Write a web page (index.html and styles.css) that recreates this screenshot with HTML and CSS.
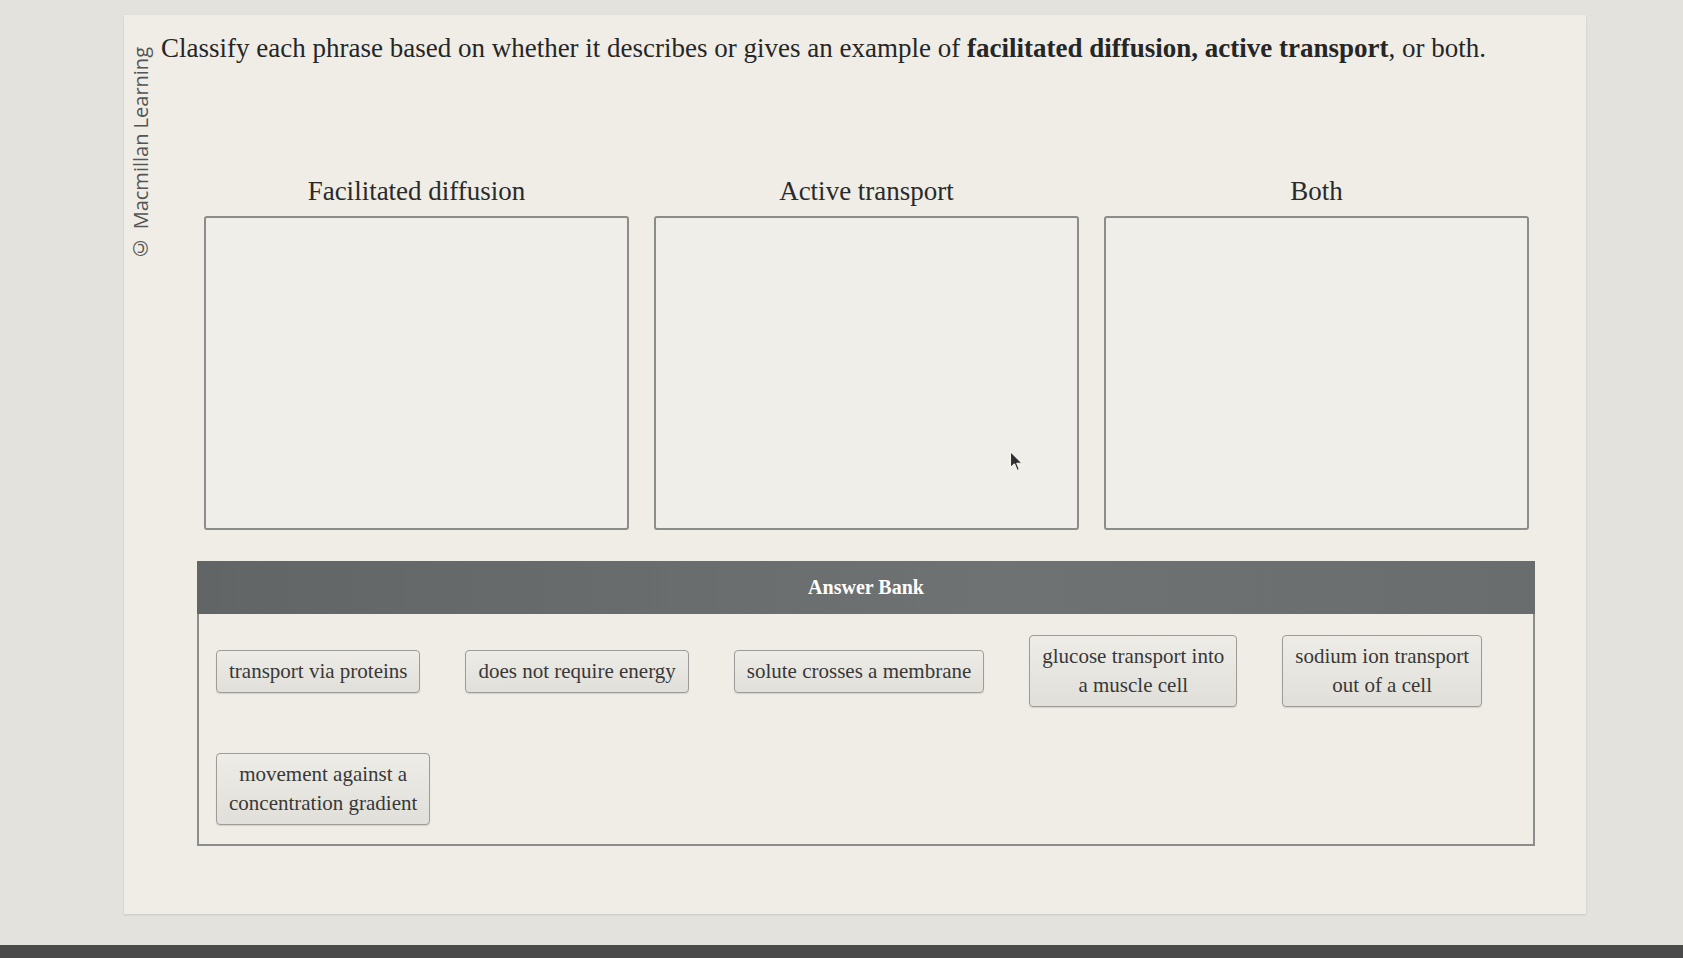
FILE: index.html
```html
<!DOCTYPE html>
<html lang="en">
<head>
<meta charset="utf-8">
<title>Classify phrases</title>
<link rel="stylesheet" href="styles.css">
</head>
<body>
<div class="screen">
  <div class="panel">
    <div class="gutter"><span class="watermark">© Macmillan Learning</span></div>
    <div class="main">
      <p class="prompt">Classify each phrase based on whether it describes or gives an example of <b>facilitated diffusion, active transport</b>, or both.</p>
      <div class="columns">
        <div class="column">
          <div class="label">Facilitated diffusion</div>
          <div class="dropbox"></div>
        </div>
        <div class="column">
          <div class="label">Active transport</div>
          <div class="dropbox"></div>
        </div>
        <div class="column">
          <div class="label">Both</div>
          <div class="dropbox"></div>
        </div>
        <svg class="cursor" width="15" height="23" viewBox="0 0 15 23"><path d="M1.5 1.5 L1.5 17.5 L5.5 14 L8.2 20.5 L10.4 19.6 L7.8 13.2 L13 13.2 Z" fill="#2f2f2f" stroke="#f4f2ec" stroke-width="1.1" stroke-linejoin="round"/></svg>
      </div>
      <div class="bank">
        <div class="bank-head">Answer Bank</div>
        <div class="bank-body">
          <div class="chip">transport via proteins</div>
          <div class="chip">does not require energy</div>
          <div class="chip">solute crosses a membrane</div>
          <div class="chip">glucose transport into<br>a muscle cell</div>
          <div class="chip">sodium ion transport<br>out of a cell</div>
          <div class="chip">movement against a<br>concentration gradient</div>
        </div>
      </div>
    </div>
  </div>
  <div class="floor"></div>
</div>
</body>
</html>
```
FILE: styles.css
```css
html, body {
  margin: 0;
  padding: 0;
}
body {
  width: 1683px;
  height: 958px;
  overflow: hidden;
  background: #e4e2dc;
  font-family: "Liberation Serif", "Times New Roman", serif;
  color: #2b2b2b;
}
.screen {
  height: 958px;
  display: flex;
  flex-direction: column;
}
.panel {
  margin: 15px 0 0 124px;
  width: 1462px;
  height: 899px;
  background: #efede6;
  display: flex;
  box-shadow: 0 1px 2px rgba(0,0,0,0.12);
}
.gutter {
  width: 37px;
  padding: 32px 0 0 6px;
  box-sizing: border-box;
}
.watermark {
  display: block;
  writing-mode: vertical-rl;
  transform: rotate(180deg);
  font-family: "Open Sans", "Noto Sans", sans-serif;
  font-size: 20px;
  line-height: 22px;
  color: #555;
  white-space: nowrap;
}
.main {
  flex: 1;
  padding-top: 18px;
}
.prompt {
  margin: 0;
  font-size: 27px;
  line-height: 30px;
  color: #262626;
}
.prompt b {
  font-weight: bold;
}
.columns {
  position: relative;
  margin: 113px 0 0 43px;
  display: flex;
  gap: 25px;
  width: 1325px;
}
.column {
  width: 425px;
  display: flex;
  flex-direction: column;
}
.label {
  text-align: center;
  font-size: 27px;
  line-height: 30px;
  margin-bottom: 10px;
  color: #2a2a2a;
}
.dropbox {
  height: 310px;
  border: 2px solid #8c8c8a;
  border-radius: 3px;
  background: #f0eee8;
}
.cursor {
  position: absolute;
  left: 805px;
  top: 274px;
}
.bank {
  margin: 31px 0 0 36px;
  width: 1338px;
}
.bank-head {
  height: 53px;
  background: linear-gradient(90deg, #626565, #6f7272 60%, #6a6d6d);
  color: #fff;
  font-weight: bold;
  font-size: 20px;
  line-height: 53px;
  text-align: center;
}
.bank-body {
  height: 232px;
  box-sizing: border-box;
  border: 2px solid #8c8c8a;
  border-top: none;
  padding: 21px 17px;
  display: flex;
  flex-wrap: wrap;
  align-items: center;
  align-content: flex-start;
  column-gap: 45px;
  row-gap: 46px;
}
.chip {
  padding: 6px 12px;
  border: 1px solid #9d9c98;
  border-radius: 4px;
  background: linear-gradient(#eeece6, #e1dfd9);
  box-shadow: 0 1px 1px rgba(0,0,0,0.12);
  font-size: 21px;
  line-height: 29px;
  text-align: center;
  color: #383838;
  white-space: nowrap;
}
.floor {
  margin-top: auto;
  height: 13px;
  background: #4a4a4a;
}
```
